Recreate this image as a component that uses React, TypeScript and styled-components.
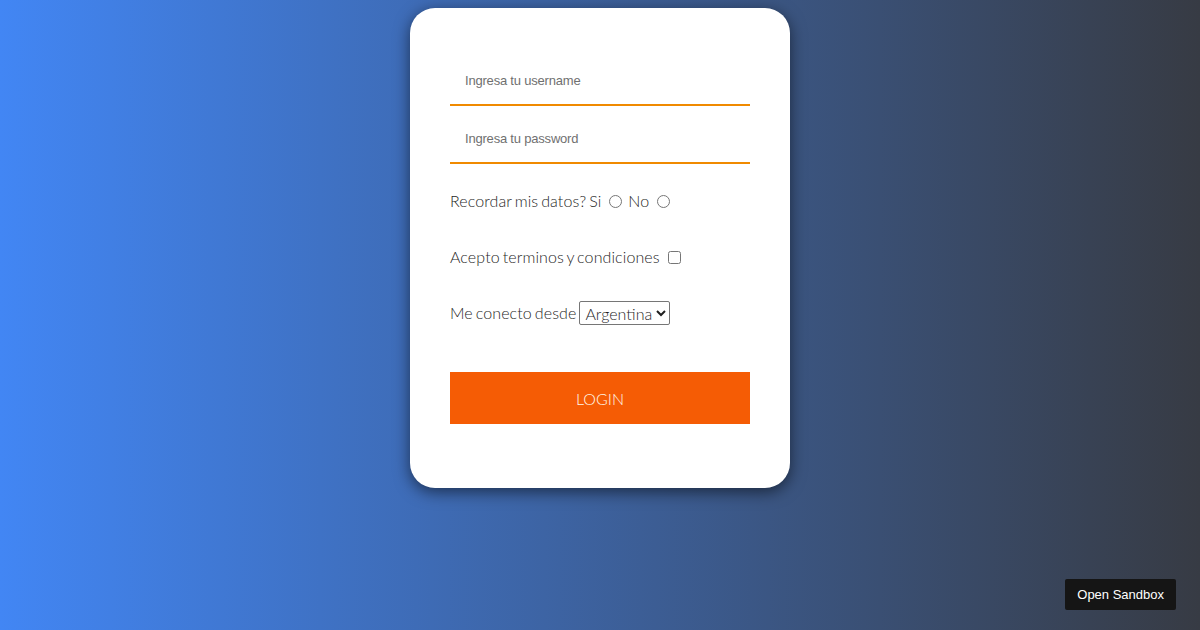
import React from "react";
import styled, { createGlobalStyle } from "styled-components";

const Global = createGlobalStyle`
  html, body { height: 100%; }
  body {
    margin: 0;
    min-height: 630px;
    background: linear-gradient(to right, #4286f4, #373b44);
    font-family: Lato, "Liberation Sans", sans-serif;
  }
`;

const Page = styled.div`
  display: flex;
  justify-content: center;
  padding-top: 8px;
`;

const Card = styled.form`
  width: 380px;
  box-sizing: border-box;
  background: #fff;
  border-radius: 25px;
  padding: 49px 40px 64px;
  box-shadow: 0 4px 16px rgba(0, 0, 0, 0.55);
  display: flex;
  flex-direction: column;
`;

const Field = styled.input`
  box-sizing: border-box;
  width: 300px;
  height: 49px;
  border: none;
  border-bottom: 2px solid #f08a00;
  padding: 0 15px;
  font-family: "Liberation Sans", Arial, sans-serif;
  font-size: 13px;
  letter-spacing: -0.2px;
  outline: none;
  margin-bottom: 9px;
  &::placeholder { color: #707070; }
`;

const Row = styled.div<{ $top: number }>`
  height: 24px;
  line-height: 24px;
  margin-top: ${(p) => p.$top}px;
  font-size: 16px;
  font-weight: 300;
  color: #1f1f1f;
  white-space: nowrap;
  letter-spacing: 0.1px;
  word-spacing: -1.5px;
`;

const Radio = styled.input`
  margin: 0 3px 0 5px;
  width: 13px;
  height: 13px;
  vertical-align: -1px;
`;

const Check = styled.input`
  margin: 0 3px 0 5px;
  width: 13px;
  height: 13px;
  vertical-align: -1px;
`;

const Select = styled.select`
  font-family: Lato, sans-serif;
  font-size: 16px;
  font-weight: 300;
  height: 24px;
  margin-left: 3px;
  color: #1f1f1f;
  border: 1px solid #767676;
  border-radius: 2px;
  background: #fff;
  padding: 0 1px;
  vertical-align: top;
`;

const LoginButton = styled.button`
  margin-top: 47px;
  width: 300px;
  height: 52px;
  border: none;
  background: #f55c05;
  color: #fff8ea;
  font-family: Lato, sans-serif;
  font-weight: 300;
  font-size: 16px;
  cursor: pointer;
`;

const Sandbox = styled.a`
  position: fixed;
  right: 24px;
  bottom: 20px;
  background: #151515;
  color: #fff;
  font-family: "Liberation Sans", Arial, sans-serif;
  font-size: 13px;
  line-height: 15px;
  padding: 8px 12px;
  border-radius: 2px;
  text-decoration: none;
`;

export default function App() {
  return (
    <>
      <Global />
      <Page>
        <Card onSubmit={(e) => e.preventDefault()}>
          <Field type="text" placeholder="Ingresa tu username" />
          <Field type="password" placeholder="Ingresa tu password" />
          <Row $top={16}>
            Recordar mis datos? Si <Radio type="radio" name="rec" /> No{" "}
            <Radio type="radio" name="rec" />
          </Row>
          <Row $top={32}>
            Acepto terminos y condiciones <Check type="checkbox" />
          </Row>
          <Row $top={32}>
            Me conecto desde
            <Select defaultValue="Argentina">
              <option>Argentina</option>
              <option>Chile</option>
              <option>Uruguay</option>
            </Select>
          </Row>
          <LoginButton type="submit">LOGIN</LoginButton>
        </Card>
      </Page>
      <Sandbox href="#">Open Sandbox</Sandbox>
    </>
  );
}
